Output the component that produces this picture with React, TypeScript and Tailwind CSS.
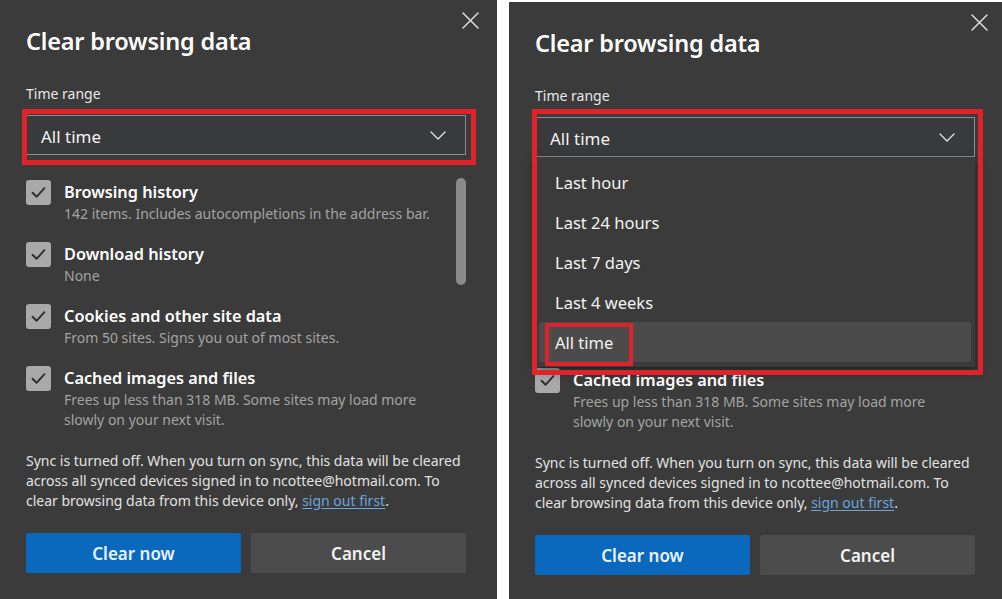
import React from 'react';

const FONT = { fontFamily: '"Noto Sans", "Open Sans", Arial, sans-serif' };

const items = [
  { title: 'Browsing history', sub: ['142 items. Includes autocompletions in the address bar.'] },
  { title: 'Download history', sub: ['None'] },
  { title: 'Cookies and other site data', sub: ['From 50 sites. Signs you out of most sites.'] },
  { title: 'Cached images and files', sub: ['Frees up less than 318 MB. Some sites may load more', 'slowly on your next visit.'] },
];

const ranges = ['Last hour', 'Last 24 hours', 'Last 7 days', 'Last 4 weeks', 'All time'];

const Check: React.FC = () => (
  <div className="w-[25px] h-[25px] shrink-0 rounded-[3px] bg-[#a9a9a9] flex items-center justify-center">
    <svg width="25" height="25" viewBox="0 0 25 25" fill="none">
      <path d="M6.5 12.8 L10.6 16.8 L18.4 8.2" stroke="#2f2f2f" strokeWidth="1.9" strokeLinecap="round" strokeLinejoin="round" />
    </svg>
  </div>
);

const Chevron: React.FC = () => (
  <svg width="16" height="9" viewBox="0 0 16 9" fill="none">
    <path d="M1 1 L8 8 L15 1" stroke="#e6e6e6" strokeWidth="1.3" strokeLinecap="round" strokeLinejoin="round" />
  </svg>
);

const CloseIcon: React.FC = () => (
  <svg width="17" height="17" viewBox="0 0 17 17" fill="none">
    <path d="M1 1 L16 16 M16 1 L1 16" stroke="#dcdcdc" strokeWidth="1.5" strokeLinecap="round" />
  </svg>
);

const Dialog: React.FC<{ open?: boolean }> = ({ open }) => (
  <div className="relative w-[497px] h-[599px] shrink-0 bg-[#3b3b3b] pl-[26px] pt-[12px]" style={FONT}>
    <div className="w-[440px]">
      {/* header */}
      <div className="flex justify-between items-start mr-[-13px]">
        <h1 className="mt-[13px] text-[23.5px] leading-[32px] font-semibold text-white tracking-[-0.2px]">
          Clear browsing data
        </h1>
        <button>
          <CloseIcon />
        </button>
      </div>

      <div className="mt-[27px] text-[14px] leading-[20px] text-[#e8e8e8]">Time range</div>

      <div className="mt-[11px] h-[40px] border border-[#8c8c8c] bg-[#393a3c] flex items-center justify-between pl-[14px] pr-[19px]">
        <span className="pt-[3px] text-[17px] text-[#f2f2f2]">All time</span>
        <Chevron />
      </div>

      {/* checkbox list */}
      <div className="mt-[25px] flex">
        <div className="flex-1 flex flex-col gap-[18px]">
          {items.map(item => (
            <div key={item.title} className="flex gap-[13px]">
              <Check />
              <div>
                <div className="text-[16.3px] leading-[24px] font-semibold text-white">{item.title}</div>
                {item.sub.map(line => (
                  <div key={line} className="text-[14px] leading-[20px] text-[#a3a3a3]">{line}</div>
                ))}
              </div>
            </div>
          ))}
        </div>
        <div className="w-[10px] shrink-0 -mt-[2px]">
          <div className="h-[107px] w-[10px] rounded-full bg-[#8a8a8a]" />
        </div>
      </div>

      <p className="mt-[21px] text-[14px] leading-[20px] text-[#e2e2e2]">
        Sync is turned off. When you turn on sync, this data will be cleared
        <br />
        across all synced devices signed in to ncottee@hotmail.com. To
        <br />
        clear browsing data from this device only,{' '}
        <a className="text-[#6aa5dc] underline underline-offset-2 decoration-[#6aa5dc]">sign out first</a>.
      </p>

      <div className="mt-[22px] flex gap-[10px]">
        <button className="w-[215px] h-[40px] pt-[1px] rounded-[2px] bg-[#0a68bd] text-[17px] font-semibold text-[#eaf2ff]">
          Clear now
        </button>
        <button className="w-[215px] h-[40px] pt-[1px] rounded-[2px] bg-[#4c4c4c] text-[17px] font-semibold text-[#f2f2f2]">
          Cancel
        </button>
      </div>
    </div>

    {open && (
      <div className="absolute left-[26px] top-[155px] w-[440px] h-[210px] bg-[#3b3b3b] shadow-[0_4px_10px_rgba(0,0,0,0.45)] px-[4px] pt-[5px]">
        {ranges.map(r => (
          <div
            key={r}
            className={
              'h-[40px] flex items-center pl-[16px] pt-[3px] rounded-[3px] text-[16.5px] text-[#f2f2f2] ' +
              (r === 'All time' ? 'bg-[#4b4b4b]' : '')
            }
          >
            {r}
          </div>
        ))}
      </div>
    )}

    {/* red highlight annotations */}
    {open ? (
      <>
        <div className="absolute left-[23px] top-[107px] w-[451px] h-[266px] border-[5px] border-[#e0232b]" />
        <div className="absolute left-[36px] top-[321px] w-[88px] h-[43px] border-[4px] border-[#e0232b]" />
      </>
    ) : (
      <div className="absolute left-[22px] top-[109px] w-[454px] h-[56px] border-[5px] border-[#e0232b]" />
    )}
  </div>
);

export default function App() {
  return (
    <div className="w-[1002px] h-[599px] bg-white flex overflow-hidden">
      <Dialog />
      <div className="ml-[12px] mt-[2px] w-[493px] h-[597px] overflow-hidden">
        <Dialog open />
      </div>
    </div>
  );
}
